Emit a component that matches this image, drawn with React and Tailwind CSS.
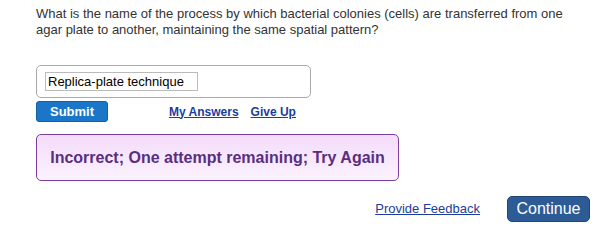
import React from 'react';

export default function App() {
  return (
    <div className="w-[605px] h-[241px] bg-white pl-[36px] pr-[15px] pt-[6px] font-['Liberation_Sans',Arial,sans-serif] text-[#333]">
      {/* Question */}
      <p className="text-[13px] leading-[16px]">
        What is the name of the process by which bacterial colonies (cells) are transferred from one
        agar plate to another, maintaining the same spatial pattern?
      </p>

      {/* Answer box */}
      <div className="mt-[27px] w-[275px] h-[33px] border border-[#aaa] rounded-[5px] pl-[8px] pt-[6px]">
        <div className="w-[153px] h-[19px] border border-[#bbb] pl-[2px] text-[13px] leading-[17px] text-black">
          Replica-plate technique
        </div>
      </div>

      {/* Actions */}
      <div className="flex items-center mt-[3px]">
        <button className="w-[72px] h-[21px] bg-[#1a76c8] border border-[#165fa3] rounded-[3px] text-white text-[13px] font-bold leading-none">
          Submit
        </button>
        <a href="#" className="ml-[61px] text-[12px] font-bold text-[#1b3d9e] underline">My Answers</a>
        <a href="#" className="ml-[12px] text-[12px] font-bold text-[#1b3d9e] underline">Give Up</a>
      </div>

      {/* Feedback */}
      <div className="mt-[12px] w-[363px] h-[47px] border border-[#7b3f9b] rounded-[5px] bg-gradient-to-b from-[#f3dcfb] to-[#fcf2fe] flex items-center justify-center">
        <span className="text-[16px] font-bold text-[#5a2e80]">Incorrect; One attempt remaining; Try Again</span>
      </div>

      {/* Footer */}
      <div className="flex items-center justify-end mt-[15px]">
        <a href="#" className="text-[13px] text-[#1b3d9e] underline">Provide Feedback</a>
        <button className="ml-[27px] w-[83px] h-[26px] bg-[#2c5b96] border border-[#1f4677] rounded-[5px] text-white text-[16px] leading-none">
          Continue
        </button>
      </div>
    </div>
  );
}
